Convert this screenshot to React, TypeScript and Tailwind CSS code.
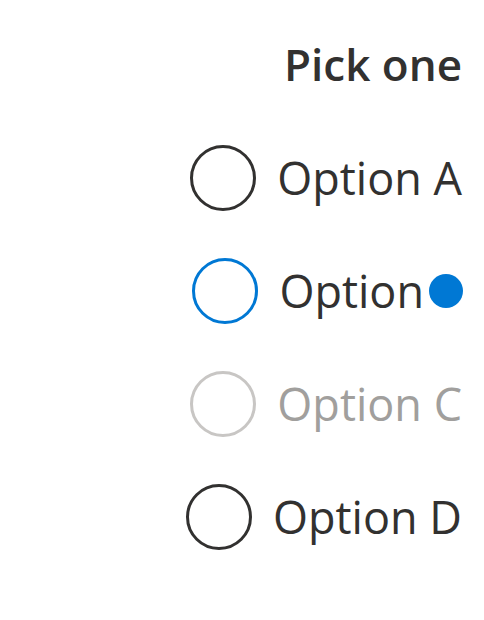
const options = [
  { key: 'A', label: 'Option A' },
  { key: 'B', label: 'Option B', checked: true },
  { key: 'C', label: 'Option C', disabled: true },
  { key: 'D', label: 'Option D' },
];

function Radio({ label, checked, disabled }: { label: string; checked?: boolean; disabled?: boolean }) {
  const ring = disabled
    ? 'border-[#c8c6c4]'
    : checked
      ? 'border-[#0078d4]'
      : 'border-[#323130]';
  const text = disabled ? 'text-[#a19f9d]' : 'text-[#323130]';

  return (
    <label className="flex h-[66px] items-center gap-[21px]">
      <span className={`box-border h-[66px] w-[66px] shrink-0 rounded-full border-[3px] bg-white ${ring}`} />
      {checked ? (
        <span className={`-mr-[1px] flex items-center gap-[5px] text-[45px] leading-[66px] ${text}`}>
          {label.replace(/ B$/, '')}
          <span aria-hidden="true" className="h-[34px] w-[34px] rounded-full bg-[#0078d4]" />
        </span>
      ) : (
        <span className={`text-[45px] leading-[66px] ${text}`}>{label}</span>
      )}
    </label>
  );
}

export default function App() {
  return (
    <main
      className="flex min-h-screen flex-col items-end bg-white pr-[22px] pt-[36px]"
      style={{ fontFamily: '"Open Sans", "Noto Sans", sans-serif' }}
    >
      <h2 className="text-[44px] font-semibold leading-[56px] text-[#323130]">Pick one</h2>
      <div role="radiogroup" className="mt-[53px] flex flex-col items-end gap-[47px]">
        {options.map((o) => (
          <Radio key={o.key} label={o.label} checked={o.checked} disabled={o.disabled} />
        ))}
      </div>
    </main>
  );
}
